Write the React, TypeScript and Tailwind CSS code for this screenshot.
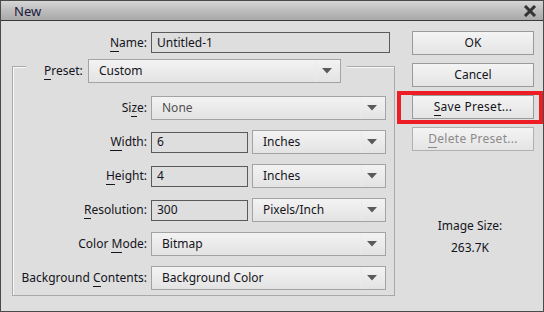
import React from "react";

const font = { fontFamily: '"Noto Sans", "Open Sans", sans-serif' };

function Arrow() {
  return (
    <svg width="10" height="6" viewBox="0 0 10 6" className="block">
      <path d="M0 0 H10 L5 5.5 Z" fill="#5a5a5a" />
    </svg>
  );
}

function Dropdown({ value, w, dim }: { value: string; w: string; dim?: boolean }) {
  return (
    <div
      className={`${w} h-[24px] flex items-center border border-[#a3a3a3] bg-gradient-to-b from-[#f3f3f3] to-[#e3e3e3]`}
    >
      <span className={`flex-1 pl-[10px] ${dim ? "text-[#505050]" : "text-[#141420]"}`}>{value}</span>
      <div className="h-full w-[20px] flex items-center justify-center border-l border-[#ebebeb] mr-[4px]">
        <Arrow />
      </div>
    </div>
  );
}

function Input({ value, w }: { value: string; w: string }) {
  return (
    <div className={`${w} h-[21px] flex items-center border border-[#5a5a5a] bg-[#dedede] pl-[5px] text-[#141420]`}>
      {value}
    </div>
  );
}

function Label({ children }: { children: React.ReactNode }) {
  return <div className="text-right text-[#141420] whitespace-nowrap">{children}</div>;
}

function Btn({ children, disabled }: { children: React.ReactNode; disabled?: boolean }) {
  return (
    <div
      className={`w-[122px] h-[24px] flex items-center justify-center border ${
        disabled ? "border-[#b0b0b0] text-[#8a8a8a]" : "border-[#9a9a9a] text-[#141420]"
      } bg-gradient-to-b from-[#f4f4f4] to-[#e4e4e4]`}
    >
      {children}
    </div>
  );
}

export default function App() {
  return (
    <div
      className="w-[544px] h-[312px] border border-[#4a4a4a] flex flex-col text-[12px] leading-[16px] bg-[#dedede]"
      style={font}
    >
      {/* title bar */}
      <div className="h-[20px] flex items-center justify-between border-b border-[#3a3a3a] bg-gradient-to-b from-[#d6d6d6] via-[#bdbdbd] to-[#a9a9a9]">
        <span className="ml-[13px] text-[13px] text-[#1a1a40]">New</span>
        <svg width="14" height="12" viewBox="0 0 14 12" className="mr-[6px]">
          <path d="M2 1 L12 11 M12 1 L2 11" stroke="#333" strokeWidth="3" />
        </svg>
      </div>

      {/* body */}
      <div className="flex-1 flex">
        {/* left */}
        <div className="w-[383px] ml-[11px] flex flex-col">
          <div className="mt-[11px] flex items-center gap-[4px]">
            <div className="w-[135px]">
              <Label>
                <u className="no-underline border-b border-[#141420] leading-[12px]">N</u>ame:
              </Label>
            </div>
            <Input value="Untitled-1" w="w-[239px]" />
          </div>

          <div className="mt-[13px] border border-[#a9a9a9] shadow-[inset_1px_1px_0_#f8f8f8] flex flex-col pb-[7px] h-[230px]">
            <div className="-mt-[8px] ml-[13px] self-start bg-[#dedede] pl-[18px] pr-[6px] flex items-center">
              <div className="w-[44px] text-[#141420]">
                <u className="no-underline border-b border-[#141420] leading-[12px]">P</u>reset:
              </div>
              <Dropdown value="Custom" w="w-[253px]" />
            </div>

            <div className="mt-[13px] grid grid-cols-[134px_auto] gap-x-[4px] gap-y-[10px] items-center auto-rows-[24px]">
              <Label>
                Si<u className="no-underline border-b border-[#141420] leading-[12px]">z</u>e:
              </Label>
              <Dropdown value="None" w="w-[235px]" dim />

              <Label>
                <u className="no-underline border-b border-[#141420] leading-[12px]">W</u>idth:
              </Label>
              <div className="flex items-center gap-[4px]">
                <Input value="6" w="w-[97px]" />
                <Dropdown value="Inches" w="w-[134px]" />
              </div>

              <Label>
                <u className="no-underline border-b border-[#141420] leading-[12px]">H</u>eight:
              </Label>
              <div className="flex items-center gap-[4px]">
                <Input value="4" w="w-[97px]" />
                <Dropdown value="Inches" w="w-[134px]" />
              </div>

              <Label>
                <u className="no-underline border-b border-[#141420] leading-[12px]">R</u>esolution:
              </Label>
              <div className="flex items-center gap-[4px]">
                <Input value="300" w="w-[97px]" />
                <Dropdown value="Pixels/Inch" w="w-[134px]" />
              </div>

              <Label>
                Color <u className="no-underline border-b border-[#141420] leading-[12px]">M</u>ode:
              </Label>
              <Dropdown value="Bitmap" w="w-[235px]" />

              <Label>
                Background <u className="no-underline border-b border-[#141420] leading-[12px]">C</u>ontents:
              </Label>
              <Dropdown value="Background Color" w="w-[235px]" />
            </div>
          </div>
        </div>

        {/* right */}
        <div className="ml-[17px] w-[122px] flex flex-col items-center">
          <div className="mt-[10px] flex flex-col gap-[8px]">
            <Btn>OK</Btn>
            <Btn>Cancel</Btn>
            <div className="relative">
              <Btn>
                <span className="tracking-[0.3px]">
                  <u className="no-underline border-b border-[#141420] leading-[12px]">S</u>ave Preset...
                </span>
              </Btn>
              <div className="absolute -left-[15px] -right-[9px] -top-[4px] -bottom-[5px] border-[4px] border-[#ee1c24]" />
            </div>
            <Btn disabled>
              <span className="tracking-[0.3px]">
                <u className="no-underline border-b border-[#8a8a8a] leading-[12px]">D</u>elete Preset...
              </span>
            </Btn>
          </div>
          <div className="mt-[67px] pr-[6px] text-[#141420] text-center">Image Size:</div>
          <div className="mt-[6px] pr-[6px] text-[#141420] text-center">263.7K</div>
        </div>
      </div>
    </div>
  );
}
